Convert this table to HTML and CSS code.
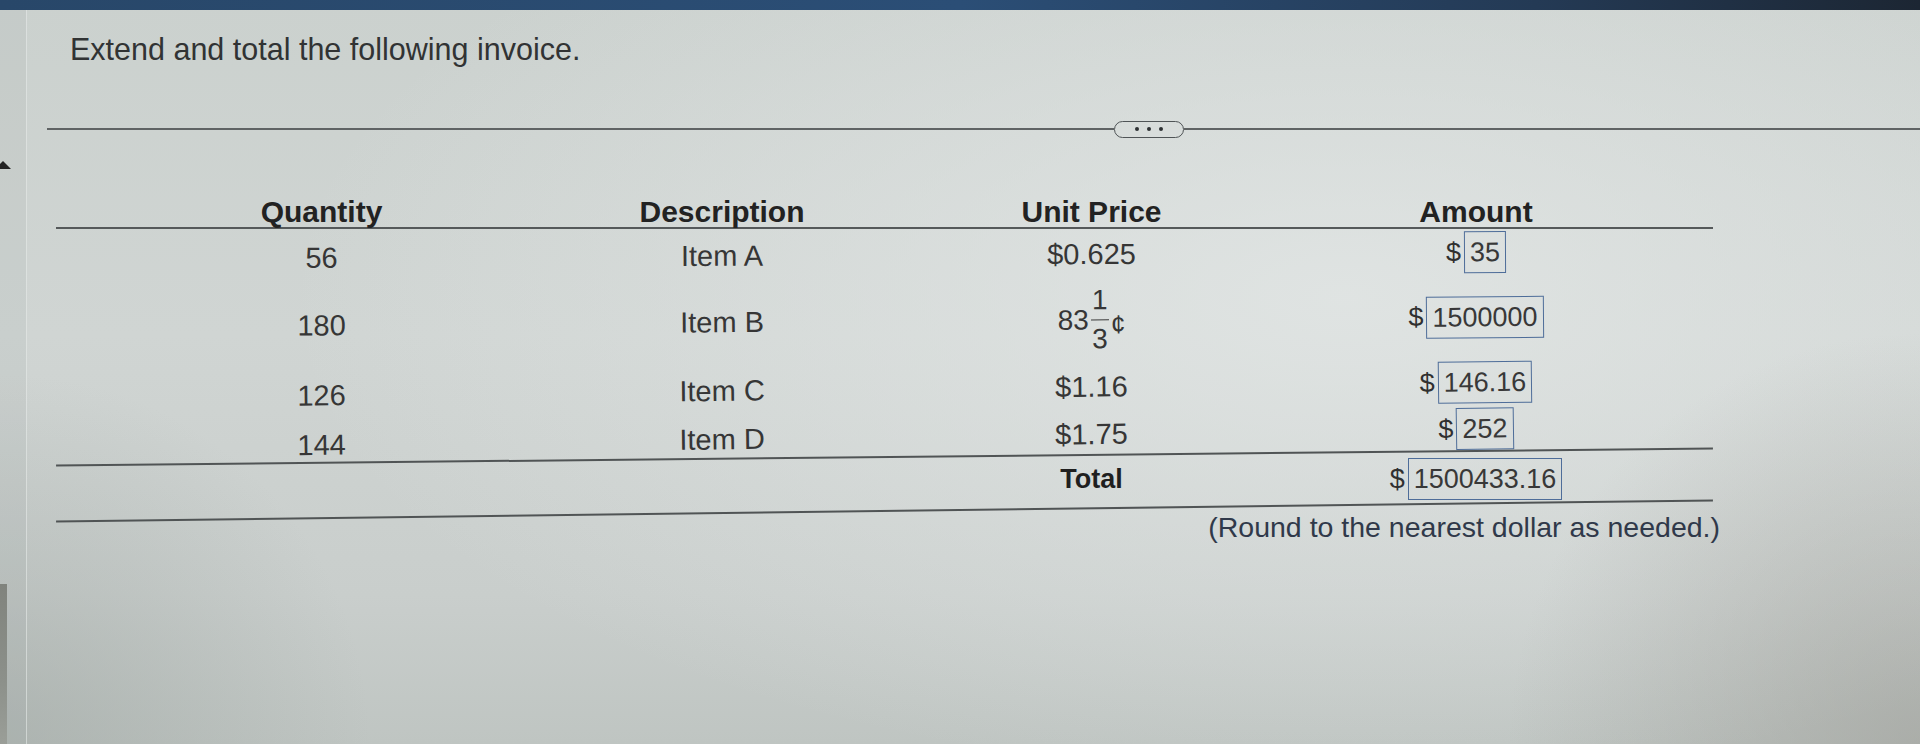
FILE: index.html
```html
<!DOCTYPE html>
<html lang="en">
<head>
<meta charset="utf-8">
<title>Invoice</title>
<link rel="stylesheet" href="styles.css">
</head>
<body>
<div class="topbar"></div>
<div class="screen">
  <aside class="rail">
    <div class="rail-arrow"></div>
    <div class="rail-bar"></div>
  </aside>
  <main class="main">
    <p class="title">Extend and total the following invoice.</p>
    <div class="sep">
      <div class="sep-line sep-left"></div>
      <div class="pill"><span class="dot"></span><span class="dot"></span><span class="dot"></span></div>
      <div class="sep-line sep-right"></div>
    </div>
    <div class="invoice">
      <div class="row head">
        <div class="cell">Quantity</div>
        <div class="cell">Description</div>
        <div class="cell">Unit Price</div>
        <div class="cell">Amount</div>
        <div class="cell"></div>
      </div>
      <div class="row r1">
        <div class="cell">56</div>
        <div class="cell">Item A</div>
        <div class="cell">$0.625</div>
        <div class="cell"><span class="amt"><span class="cur">$</span><span class="box">35</span></span></div>
        <div class="cell"></div>
      </div>
      <div class="row r2">
        <div class="cell">180</div>
        <div class="cell">Item B</div>
        <div class="cell"><span class="mixed">83<span class="frac"><span class="num">1</span><span class="bar"></span><span class="num">3</span></span><span class="cent">¢</span></span></div>
        <div class="cell"><span class="amt"><span class="cur">$</span><span class="box">1500000</span></span></div>
        <div class="cell"></div>
      </div>
      <div class="row r3">
        <div class="cell">126</div>
        <div class="cell">Item C</div>
        <div class="cell">$1.16</div>
        <div class="cell"><span class="amt"><span class="cur">$</span><span class="box">146.16</span></span></div>
        <div class="cell"></div>
      </div>
      <div class="row r4">
        <div class="cell">144</div>
        <div class="cell">Item D</div>
        <div class="cell">$1.75</div>
        <div class="cell"><span class="amt"><span class="cur">$</span><span class="box">252</span></span></div>
        <div class="cell"></div>
      </div>
      <div class="rule rule-1"></div>
      <div class="row total">
        <div class="cell"></div>
        <div class="cell"></div>
        <div class="cell total-label">Total</div>
        <div class="cell"><span class="amt amt-total"><span class="cur">$</span><span class="box">1500433.16</span></span></div>
        <div class="cell"></div>
      </div>
      <div class="rule rule-2"></div>
    </div>
    <p class="note">(Round to the nearest dollar as needed.)</p>
  </main>
</div>
</body>
</html>
```

FILE: styles.css
```css
html, body {
  margin: 0;
  padding: 0;
}

body {
  width: 1920px;
  height: 744px;
  overflow: hidden;
  font-family: "Liberation Sans", Arial, sans-serif;
  color: #363636;
  background:
    radial-gradient(circle at 0% 100%, rgba(150, 158, 154, 0.45), rgba(150, 158, 154, 0) 18%),
    radial-gradient(circle at 100% 100%, rgba(150, 150, 144, 0.5), rgba(150, 150, 144, 0) 20%),
    radial-gradient(ellipse 55% 65% at 70% 40%, rgba(226, 230, 229, 0.85), rgba(226, 230, 229, 0) 100%),
    linear-gradient(to bottom, #cbd1ce 0%, #d0d5d3 45%, #c9cecc 80%, #bfc5c2 100%);
}

.topbar {
  height: 10px;
  background: linear-gradient(to right, #284769 0%, #2b4e76 50%, #243a55 80%, #1c2633 100%);
}

.screen {
  display: flex;
  height: 734px;
}

.rail {
  width: 26px;
  flex: none;
  display: flex;
  flex-direction: column;
  border-right: 1px solid rgba(236, 240, 238, 0.55);
  background: rgba(160, 168, 165, 0.12);
}

.rail-arrow {
  width: 0;
  height: 0;
  margin-top: 151px;
  margin-left: -5px;
  border-left: 8px solid transparent;
  border-right: 8px solid transparent;
  border-bottom: 8px solid #232323;
}

.rail-bar {
  margin-top: auto;
  width: 7px;
  height: 160px;
  background: linear-gradient(to bottom, #80837d, #8c908a 60%, #9a9e98);
}

.main {
  flex: 1;
  padding-top: 21px;
}

.title {
  margin: 0 0 0 43px;
  font-size: 30.5px;
  line-height: 36px;
  color: #313334;
}

.sep {
  display: flex;
  align-items: center;
  margin: 53px 0 0 20px;
  height: 18px;
}

.sep-line {
  height: 2px;
  background: #5f6364;
}

.sep-left {
  width: 1067px;
  flex: none;
}

.sep-right {
  flex: 1;
}

.pill {
  flex: none;
  width: 68px;
  height: 15px;
  border: 1.5px solid #4f5456;
  border-radius: 9px;
  display: flex;
  align-items: center;
  justify-content: center;
  gap: 8px;
}

.dot {
  width: 4px;
  height: 4px;
  border-radius: 50%;
  background: #2e3133;
}

.invoice {
  margin: 59px 0 0 29px;
  width: 1657px;
}

.row {
  display: grid;
  grid-template-columns: 531px 270px 469px 300px 87px;
  align-items: center;
  font-size: 29px;
}

.cell {
  text-align: center;
  white-space: nowrap;
}

.head {
  font-size: 30px;
  font-weight: bold;
  line-height: 30px;
  color: #222;
  border-bottom: 2px solid #55595a;
}

.r1 {
  height: 52px;
  transform: rotate(-0.27deg);
}

.r2 {
  height: 81px;
  transform: rotate(-0.45deg);
}

.r3 {
  height: 54px;
  transform: rotate(-0.65deg);
}

.r4 {
  height: 40px;
  transform: rotate(-0.8deg);
}

.total {
  height: 42px;
}

.rule {
  height: 2px;
  background: #505455;
}

.rule-1 {
  transform: rotate(-0.59deg);
}

.rule-2 {
  margin-top: 10px;
  transform: rotate(-0.73deg);
}

.total-label {
  font-weight: bold;
  font-size: 27px;
  color: #1f1f1f;
}

.amt {
  display: inline-flex;
  align-items: center;
  gap: 3px;
  font-size: 27px;
  vertical-align: middle;
}

.cur {
  color: #303030;
}

.box {
  display: inline-block;
  height: 40px;
  line-height: 40px;
  padding: 0 5px;
  border: 1px solid #4e6d99;
  color: #383838;
}

.mixed {
  display: inline-flex;
  align-items: center;
  font-size: 28px;
  color: #363636;
}

.frac {
  display: inline-flex;
  flex-direction: column;
  align-items: center;
  margin: 0 2px 0 2px;
}

.num {
  line-height: 30px;
}

.bar {
  width: 18px;
  height: 1px;
  margin: 4px 0;
  background: #3a3a3a;
}

.cent {
  font-size: 26px;
  margin-top: 10px;
}

.note {
  margin: 0;
  width: 1693px;
  text-align: right;
  font-size: 28.5px;
  line-height: 30px;
  color: #30394a;
}
```
